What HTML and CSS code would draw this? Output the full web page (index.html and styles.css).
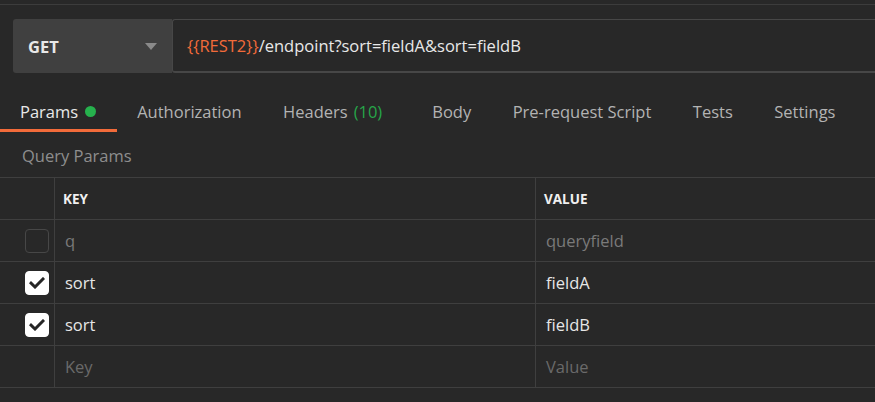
FILE: index.html
```html
<!DOCTYPE html>
<html>
<head>
<meta charset="utf-8">
<link rel="stylesheet" href="styles.css">
</head>
<body>
<div class="app">
  <div class="topline"></div>
  <div class="request-bar">
    <div class="method">
      <span class="method-name">GET</span>
      <svg class="caret" width="12" height="7" viewBox="0 0 12 7"><path d="M0 0 H12 L6 7 Z" fill="#8a8a8a"/></svg>
    </div>
    <div class="url"><span class="var">{{REST2}}</span>/endpoint?sort=fieldA&amp;sort=fieldB</div>
  </div>
  <div class="tabs">
    <div class="tab active">Params <span class="dot"></span></div>
    <div class="tab">Authorization</div>
    <div class="tab tab-headers">Headers <span class="count">(10)</span></div>
    <div class="tab">Body</div>
    <div class="tab">Pre-request Script</div>
    <div class="tab">Tests</div>
    <div class="tab">Settings</div>
  </div>
  <div class="section-title">Query Params</div>
  <div class="table">
    <div class="row head">
      <div class="cell check"></div>
      <div class="cell key">KEY</div>
      <div class="cell value">VALUE</div>
    </div>
    <div class="row">
      <div class="cell check"><span class="box"></span></div>
      <div class="cell key muted">q</div>
      <div class="cell value muted">queryfield</div>
    </div>
    <div class="row">
      <div class="cell check"><span class="box checked"><svg width="16" height="12" viewBox="0 0 16 12"><path d="M2 6.2 L6 10 L14 2" fill="none" stroke="#262626" stroke-width="3" stroke-linecap="square"/></svg></span></div>
      <div class="cell key">sort</div>
      <div class="cell value">fieldA</div>
    </div>
    <div class="row">
      <div class="cell check"><span class="box checked"><svg width="16" height="12" viewBox="0 0 16 12"><path d="M2 6.2 L6 10 L14 2" fill="none" stroke="#262626" stroke-width="3" stroke-linecap="square"/></svg></span></div>
      <div class="cell key">sort</div>
      <div class="cell value">fieldB</div>
    </div>
    <div class="row">
      <div class="cell check"></div>
      <div class="cell key placeholder">Key</div>
      <div class="cell value placeholder">Value</div>
    </div>
  </div>
</div>
</body>
</html>
```
FILE: styles.css
```css
html, body {
  margin: 0;
  padding: 0;
  background: #282828;
}
.app {
  width: 875px;
  height: 402px;
  overflow: hidden;
  font-family: "Open Sans", "Noto Sans", sans-serif;
  color: #e6e6e6;
  background: #282828;
}
.topline {
  height: 4px;
  border-bottom: 1px solid #3c3c3c;
}
.request-bar {
  display: flex;
  margin-top: 14px;
  padding-left: 13px;
  height: 54px;
}
.method {
  width: 159px;
  box-sizing: border-box;
  background: #404040;
  border-radius: 3px 0 0 3px;
  display: flex;
  align-items: center;
  padding-left: 15px;
  padding-right: 15px;
}
.method-name {
  flex: 1;
  font-weight: 700;
  font-size: 16.5px;
  color: #e8e8e8;
}
.caret {
  display: block;
  margin-top: 1px;
}
.url {
  flex: 1;
  box-sizing: border-box;
  border: 1px solid #474747;
  border-right: none;
  border-bottom-width: 2px;
  border-radius: 3px 0 0 3px;
  background: #282828;
  display: flex;
  align-items: center;
  padding-left: 14px;
  font-size: 16.5px;
  color: #e8e8e8;
}
.var {
  color: #f26b3a;
}
.tabs {
  display: flex;
  margin-top: 19px;
  height: 40px;
}
.tab {
  box-sizing: border-box;
  padding: 2px 21.5px 0 20px;
  display: flex;
  align-items: center;
  font-size: 16.5px;
  color: #b3b3b3;
  border-bottom: 3px solid transparent;
  white-space: nowrap;
}
.tab.active {
  color: #e8e8e8;
  border-bottom-color: #f26b3a;
  padding-right: 21px;
}
.tab-headers {
  padding-right: 30px;
}
.dot {
  display: inline-block;
  width: 11px;
  height: 11px;
  border-radius: 50%;
  background: #26b14d;
  margin-left: 7px;
}
.count {
  color: #26a648;
  margin-left: 6px;
}
.section-title {
  height: 45px;
  line-height: 48px;
  padding-left: 22px;
  font-size: 16.5px;
  color: #8e8e8e;
}
.table {
  border-top: 1px solid #3f3f3f;
}
.row {
  display: flex;
  height: 42px;
  box-sizing: border-box;
  border-bottom: 1px solid #3f3f3f;
}
.cell {
  display: flex;
  align-items: center;
  box-sizing: border-box;
  font-size: 16.5px;
}
.check {
  width: 55px;
  border-right: 1px solid #3f3f3f;
  padding-left: 25px;
}
.key {
  width: 481px;
  border-right: 1px solid #3f3f3f;
  padding-left: 10px;
}
.value {
  flex: 1;
  padding-left: 10px;
}
.head .cell {
  font-size: 13.5px;
  font-weight: 700;
  color: #f0f0f0;
  padding-left: 8px;
}
.head .check {
  padding-left: 0;
}
.muted {
  color: #7a7a7a;
}
.placeholder {
  color: #6a6a6a;
}
.box {
  width: 24px;
  height: 24px;
  box-sizing: border-box;
  border: 1px solid #474747;
  border-radius: 4px;
  display: flex;
  align-items: center;
  justify-content: center;
}
.box.checked {
  background: #ffffff;
  border-color: #ffffff;
}
```
